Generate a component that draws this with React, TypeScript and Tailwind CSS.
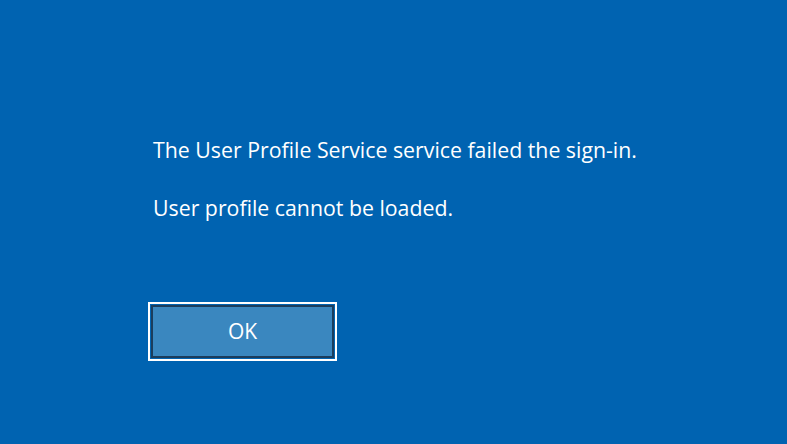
export default function App() {
  return (
    <div className="w-[787px] h-[444px] bg-[#0063b1] text-white overflow-hidden font-['Open_Sans',sans-serif]">
      <div className="flex flex-col pl-[153px] pt-[136px]">
        <p className="text-[21.3px] leading-[28px]">The User Profile Service service failed the sign-in.</p>
        <p className="text-[21.3px] leading-[28px] mt-[30px]">User profile cannot be loaded.</p>
        <div className="mt-[80px] -ml-[5px]">
          <button className="w-[189px] h-[59px] border-2 border-white p-px bg-[#0063b1]">
            <div className="w-full h-full border-2 border-[#1b3d5c] bg-[#3a87bf] flex items-center justify-center text-[21px]">
              OK
            </div>
          </button>
        </div>
      </div>
    </div>
  )
}
